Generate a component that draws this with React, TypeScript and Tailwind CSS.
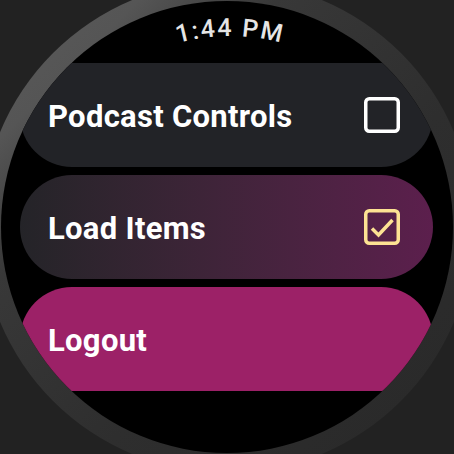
import { ReactNode } from 'react'

type Row = { label: string; kind: 'off' | 'on' | 'action' }

const ROWS: Row[] = [
  { label: 'Podcast Controls', kind: 'off' },
  { label: 'Load Items', kind: 'on' },
  { label: 'Logout', kind: 'action' },
]

function Box({ checked }: { checked: boolean }) {
  return (
    <svg width="36" height="36" viewBox="0 0 36 36" className="shrink-0">
      <rect
        x="1.75"
        y="1.75"
        width="32.5"
        height="32.5"
        rx="3.5"
        fill="none"
        stroke={checked ? '#fde293' : '#ffffff'}
        strokeWidth="3.5"
      />
      {checked && (
        <path d="M8 19.5 L14.5 26 L28.5 11" fill="none" stroke="#fde293" strokeWidth="3.5" strokeLinecap="butt" strokeLinejoin="miter" />
      )}
    </svg>
  )
}

function Chip({ row }: { row: Row }) {
  const bg =
    row.kind === 'on'
      ? 'bg-gradient-to-r from-[#242428] to-[#5c1f4d]'
      : row.kind === 'action'
        ? 'bg-[#9c2167]'
        : 'bg-[#222327]'
  let trailing: ReactNode = null
  if (row.kind !== 'action') trailing = <Box checked={row.kind === 'on'} />
  return (
    <div className={`h-[104px] w-[413px] rounded-full ${bg} flex items-center pl-[28px] pr-[33px]`}>
      <span className="flex-1 text-white text-[31px] font-bold leading-none tracking-[0.3px] pt-[3px]">{row.label}</span>
      {trailing}
    </div>
  )
}

export default function App() {
  return (
    <div className="relative w-[454px] h-[454px] bg-[#222222] overflow-hidden" style={{ fontFamily: 'Roboto, "Liberation Sans", sans-serif' }}>
      {/* bezel ring */}
      <div className="absolute -left-[19px] -top-[19px] w-[492px] h-[492px] rounded-full bg-[linear-gradient(135deg,#5c5c5c_0%,#555555_18%,#383838_32%,#2e2e2e_60%,#282828_100%)]" />

      {/* screen */}
      <div className="absolute left-px top-px w-[452px] h-[452px] rounded-full bg-black overflow-hidden">
        <div className="flex flex-col gap-2 pt-[62px] pl-[19px]">
          {ROWS.map(r => (
            <Chip key={r.label} row={r} />
          ))}
        </div>

        {/* curved clock */}
        <svg className="absolute left-0 top-0" width="452" height="452" viewBox="0 0 452 452">
          <defs>
            <path id="clockArc" d="M 36 228 A 193 193 0 0 1 422 228" />
          </defs>
          <text fill="#e6e6e6" fontSize="25" fontWeight="500" letterSpacing="1.8" fontFamily='Roboto, "Liberation Sans", sans-serif'>
            <textPath href="#clockArc" startOffset="50%" textAnchor="middle">
              1:44 PM
            </textPath>
          </text>
        </svg>
      </div>
    </div>
  )
}
